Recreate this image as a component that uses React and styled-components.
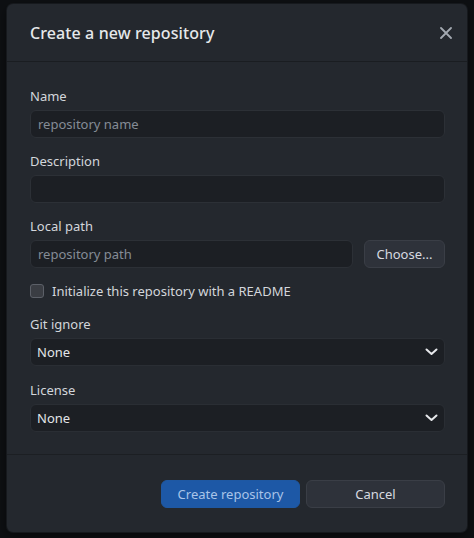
import React from "react";
import styled, { createGlobalStyle } from "styled-components";

const Global = createGlobalStyle`
  html, body { margin: 0; padding: 0; background: #0e1013; }
  body { font-family: "Noto Sans", "Open Sans", sans-serif; }
  * { box-sizing: border-box; }
`;

const Page = styled.div`
  width: 474px;
  height: 538px;
  padding: 4px 7px 0 7px;
  background: #0e1013;
`;

const Dialog = styled.div`
  width: 460px;
  height: 528px;
  background: #24282e;
  border-radius: 6px;
  display: flex;
  flex-direction: column;
  box-shadow: 0 0 0 1px #16191d, 0 4px 12px rgba(0, 0, 0, 0.5);
  overflow: hidden;
`;

const Header = styled.div`
  height: 58px;
  flex: none;
  display: flex;
  align-items: center;
  justify-content: space-between;
  padding: 0 15px 0 23px;
  border-bottom: 1px solid #1a1d21;
`;

const Title = styled.h1`
  margin: 0;
  font-size: 16px;
  font-weight: 500;
  color: #e6e8eb;
  letter-spacing: 0.1px;
`;

const Close = styled.button`
  width: 12px;
  height: 12px;
  padding: 0;
  border: none;
  background: none;
  display: flex;
  color: #a3a9b1;
  cursor: pointer;
`;

const Body = styled.div`
  flex: 1;
  padding: 24px 22px 22px 23px;
  display: flex;
  flex-direction: column;
  border-bottom: 1px solid #1c1f23;
`;

const Field = styled.div`
  display: flex;
  flex-direction: column;
  gap: 4px;
  margin-bottom: ${(p) => p.$mb ?? 13}px;
`;

const Label = styled.label`
  font-size: 13px;
  line-height: 20px;
  color: #d3d6db;
`;

const Row = styled.div`
  display: flex;
  gap: 11px;
`;

const Input = styled.input`
  flex: 1 1 auto;
  min-width: 0;
  height: 28px;
  min-height: 28px;
  border-radius: 6px;
  border: 1px solid #2c3036;
  background: #1c1f24;
  color: #e0e3e7;
  font-family: inherit;
  font-size: 13px;
  padding: 0 7px;
  outline: none;
  &::placeholder { color: #858c96; }
`;

const Button = styled.button`
  height: 28px;
  width: ${(p) => p.$w}px;
  flex: none;
  border-radius: 6px;
  font-family: inherit;
  font-size: 13px;
  border: 1px solid ${(p) => (p.$primary ? "#1e58a3" : "#3a3e46")};
  background: ${(p) => (p.$primary ? "#1d58a6" : "#2e323a")};
  color: ${(p) => (p.$primary ? "#a9c4e8" : "#d7dae0")};
  padding: 0;
`;

const CheckRow = styled.label`
  display: flex;
  align-items: center;
  gap: 8px;
  height: 20px;
  margin-bottom: 13px;
  font-size: 13px;
  color: #d3d6db;
`;

const Box = styled.span`
  width: 14px;
  height: 14px;
  border-radius: 3px;
  border: 1px solid #5c6068;
  background: #3a3d43;
  flex: none;
`;

const SelectBox = styled.div`
  height: 28px;
  border-radius: 6px;
  border: 1px solid #2a2e34;
  background: #1c1f24;
  display: flex;
  align-items: center;
  justify-content: space-between;
  padding: 0 6px 0 6px;
  font-size: 13px;
  color: #e2e5e9;
`;

const Chevron = () => (
  <svg width="13" height="8" viewBox="0 0 13 8" fill="none">
    <path d="M1.5 1.5 L6.5 6 L11.5 1.5" stroke="#e6e8eb" strokeWidth="2" strokeLinecap="round" strokeLinejoin="round" />
  </svg>
);

const Footer = styled.div`
  flex: none;
  height: 77px;
  display: flex;
  justify-content: flex-end;
  gap: 6px;
  padding: 25px 22px 0 0;
`;

function Select({ value }) {
  return (
    <SelectBox>
      <span>{value}</span>
      <Chevron />
    </SelectBox>
  );
}

export default function App() {
  return (
    <>
      <Global />
      <Page>
        <Dialog>
          <Header>
            <Title>Create a new repository</Title>
            <Close aria-label="Close">
              <svg width="12" height="12" viewBox="0 0 12 12">
                <path d="M1 1 L11 11 M11 1 L1 11" stroke="currentColor" strokeWidth="1.8" strokeLinecap="round" />
              </svg>
            </Close>
          </Header>
          <Body>
            <Field>
              <Label>Name</Label>
              <Input placeholder="repository name" />
            </Field>
            <Field>
              <Label>Description</Label>
              <Input />
            </Field>
            <Field $mb={13}>
              <Label>Local path</Label>
              <Row>
                <Input placeholder="repository path" />
                <Button $w={81}>Choose...</Button>
              </Row>
            </Field>
            <CheckRow>
              <Box />
              Initialize this repository with a README
            </CheckRow>
            <Field $mb={14}>
              <Label>Git ignore</Label>
              <Select value="None" />
            </Field>
            <Field $mb={0}>
              <Label>License</Label>
              <Select value="None" />
            </Field>
          </Body>
          <Footer>
            <Button $primary $w={139}>Create repository</Button>
            <Button $w={139}>Cancel</Button>
          </Footer>
        </Dialog>
      </Page>
    </>
  );
}
